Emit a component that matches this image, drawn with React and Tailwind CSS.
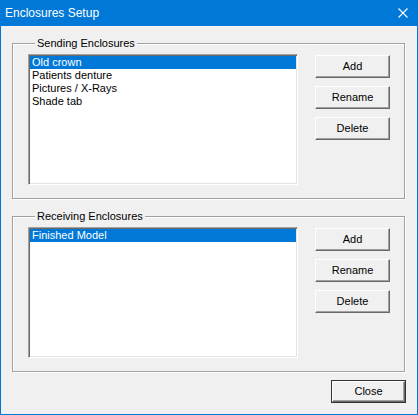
import React from 'react';

const sendingItems = ['Old crown', 'Patients denture', 'Pictures / X-Rays', 'Shade tab'];
const receivingItems = ['Finished Model'];

function PushButton({ children, isDefault }) {
  if (isDefault) {
    return (
      <button className="w-[75px] h-[23px] border border-[#333333] bg-[#f0f0f0] p-0 text-[11px] leading-[13px] text-black">
        <span className="flex h-full w-full items-center justify-center border-t border-l border-t-white border-l-white border-b border-r border-b-[#696969] border-r-[#696969] shadow-[inset_-1px_-1px_0_#a0a0a0]">
          {children}
        </span>
      </button>
    );
  }
  return (
    <button className="flex w-[75px] h-[23px] items-center justify-center border-t border-l border-t-white border-l-white border-b border-r border-b-[#696969] border-r-[#696969] bg-[#f0f0f0] shadow-[inset_-1px_-1px_0_#a0a0a0] text-[11px] leading-[13px] text-black">
      {children}
    </button>
  );
}

function ListBox({ items, selected }) {
  return (
    <div className="w-[270px] h-[131px] border-t border-l border-t-[#a0a0a0] border-l-[#a0a0a0] border-b border-r border-b-white border-r-white bg-white p-px shadow-[inset_1px_1px_0_#696969,inset_-1px_-1px_0_#e3e3e3]">
      {items.map((item, i) => (
        <div
          key={item}
          className={
            i === selected
              ? 'h-[13px] pl-[2px] text-[11px] leading-[13px] bg-[#0078d7] text-white'
              : 'h-[13px] pl-[2px] text-[11px] leading-[13px] text-black'
          }
        >
          {item}
        </div>
      ))}
    </div>
  );
}

function GroupBox({ title, items, className = '' }) {
  return (
    <fieldset
      className={
        'w-[393px] border border-[#a0a0a0] shadow-[inset_1px_1px_0_#fff,1px_1px_0_#fff] pl-[15px] pr-[14px] pt-[4px] pb-[13px] ' +
        className
      }
    >
      <legend className="ml-[7px] px-[2px] bg-[#f0f0f0] text-[11px] leading-[13px] text-black">{title}</legend>
      <div className="flex gap-[17px]">
        <ListBox items={items} selected={0} />
        <div className="flex flex-col gap-[8px] pt-[1px]">
          <PushButton>Add</PushButton>
          <PushButton>Rename</PushButton>
          <PushButton>Delete</PushButton>
        </div>
      </div>
    </fieldset>
  );
}

export default function App() {
  return (
    <div className="flex flex-col w-[418px] h-[415px] bg-[#0078d7] font-['Liberation_Sans',Arial,sans-serif] select-none">
      {/* Title bar */}
      <div className="flex h-[26px] items-center justify-between pl-[5px] pr-[10px] text-white">
        <span className="text-[12px] leading-[14px]">Enclosures Setup</span>
        <svg width="10" height="10" viewBox="0 0 10 10" fill="none" stroke="#fff" strokeWidth="1.1">
          <path d="M0.5 0.5l9 9M9.5 0.5l-9 9" />
        </svg>
      </div>

      {/* Client area */}
      <div className="flex-1 mx-px mb-px bg-[#f0f0f0] pl-[11px] pt-[11px]">
        <div className="w-[394px] flex flex-col">
          <GroupBox title="Sending Enclosures" items={sendingItems} />
          <GroupBox title="Receiving Enclosures" items={receivingItems} className="mt-[11px]" />
          <div className="flex justify-end mt-[8px]">
            <PushButton isDefault>Close</PushButton>
          </div>
        </div>
      </div>
    </div>
  );
}
